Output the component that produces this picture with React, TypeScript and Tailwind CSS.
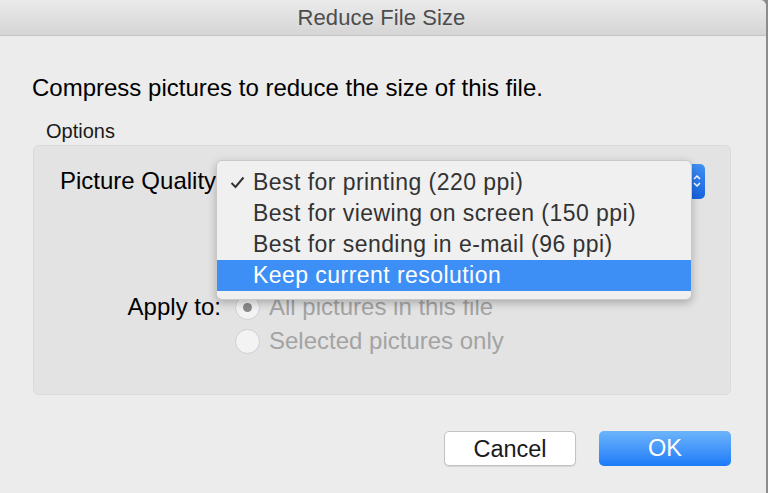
import React from "react";

const font = { fontFamily: '"Liberation Sans", Arial, sans-serif' };

export default function App() {
  return (
    <div className="w-[768px] h-[493px] overflow-hidden flex bg-[#8c8c8c]" style={font}>
      <div className="w-[766px] h-[493px] flex flex-col bg-[#ececec] rounded-tr-[6px] overflow-hidden">
        {/* Title bar */}
        <div className="h-[36px] shrink-0 flex items-center justify-center bg-gradient-to-b from-[#ebebeb] to-[#d5d5d5] border-b border-[#c4c4c4]">
          <span className="text-[22px] text-[#4d4d4d] ml-[-3px] mt-[-1px] tracking-[0.1px]">Reduce File Size</span>
        </div>
        {/* Body */}
        <div className="flex flex-col pl-[32px] pr-[35px]">
          <div className="text-[24px] text-black mt-[38px] leading-[28px]">
            Compress pictures to reduce the size of this file.
          </div>
          <div className="text-[20px] text-[#1a1a1a] mt-[18px] ml-[14px] leading-[22px]">Options</div>
          <div className="relative mt-[3px] h-[250px] rounded-[6px] bg-[#e3e3e3] border border-[#dadada] ml-[1px]">
            {/* Picture Quality row */}
            <div className="flex items-center h-[36px] mt-[17px]">
              <span className="text-[24px] text-black ml-[26px]">Picture Quality:</span>
              <div className="flex-1" />
              <div className="w-[16px] h-[35px] mr-[25px] rounded-r-[5px] bg-gradient-to-b from-[#3f8ff5] to-[#1663de] flex items-center justify-center">
                <svg width="8" height="16" viewBox="0 0 8 16">
                  <path d="M1 6 L4 3 L7 6 M1 10 L4 13 L7 10" stroke="white" strokeWidth="1.5" fill="none" />
                </svg>
              </div>
            </div>
            {/* Apply to */}
            <div className="flex mt-[91px]">
              <div className="w-[187px] text-right text-[24px] text-black leading-[34px]">Apply to:</div>
              <div className="flex flex-col ml-[14px]">
                <div className="flex items-center h-[34px]">
                  <div className="w-[25px] h-[25px] rounded-full border border-[#d0d0d0] bg-[#f3f3f3] flex items-center justify-center">
                    <div className="w-[9px] h-[9px] rounded-full bg-[#8a8a8a]" />
                  </div>
                  <span className="ml-[9px] text-[24px] text-[#a3a3a3]">All pictures in this file</span>
                </div>
                <div className="flex items-center h-[34px]">
                  <div className="w-[25px] h-[25px] rounded-full border border-[#d0d0d0] bg-[#f3f3f3]" />
                  <span className="ml-[9px] text-[24px] text-[#a3a3a3]">Selected pictures only</span>
                </div>
              </div>
            </div>
            {/* Dropdown menu overlay */}
            <div className="absolute left-[182px] top-[14px] w-[476px] rounded-[6px] bg-[#f0f0f0] border border-[#c9c9c9] shadow-[0_3px_8px_rgba(0,0,0,0.25)] pt-[6px] pb-[8px]">
              {[
                "Best for printing (220 ppi)",
                "Best for viewing on screen (150 ppi)",
                "Best for sending in e-mail (96 ppi)",
                "Keep current resolution",
              ].map((t, i) => (
                <div
                  key={t}
                  className={
                    i === 3
                      ? "h-[31px] flex items-center bg-[#3d8ff6] text-white"
                      : "h-[31px] flex items-center text-[#333333]"
                  }
                >
                  <div className="w-[36px] flex justify-end pr-[8px]">
                    {i === 0 && (
                      <svg width="15" height="13" viewBox="0 0 15 13">
                        <path d="M1.5 7 L5.5 11 L13.5 1.5" stroke="#333" strokeWidth="2" fill="none" />
                      </svg>
                    )}
                  </div>
                  <span className="text-[23px] tracking-[0.45px]">{t}</span>
                </div>
              ))}
            </div>
          </div>
          {/* Buttons */}
          <div className="flex justify-end gap-[23px] mt-[36px]">
            <button className="w-[132px] h-[35px] rounded-[5px] bg-white border border-[#c3c3c3] shadow-[0_1px_1px_rgba(0,0,0,0.1)] text-[23.5px] text-[#1a1a1a]">
              Cancel
            </button>
            <button className="w-[132px] h-[35px] rounded-[5px] bg-gradient-to-b from-[#6cb4fa] to-[#1a7af8] text-[23.5px] text-white">
              OK
            </button>
          </div>
        </div>
      </div>
    </div>
  );
}
